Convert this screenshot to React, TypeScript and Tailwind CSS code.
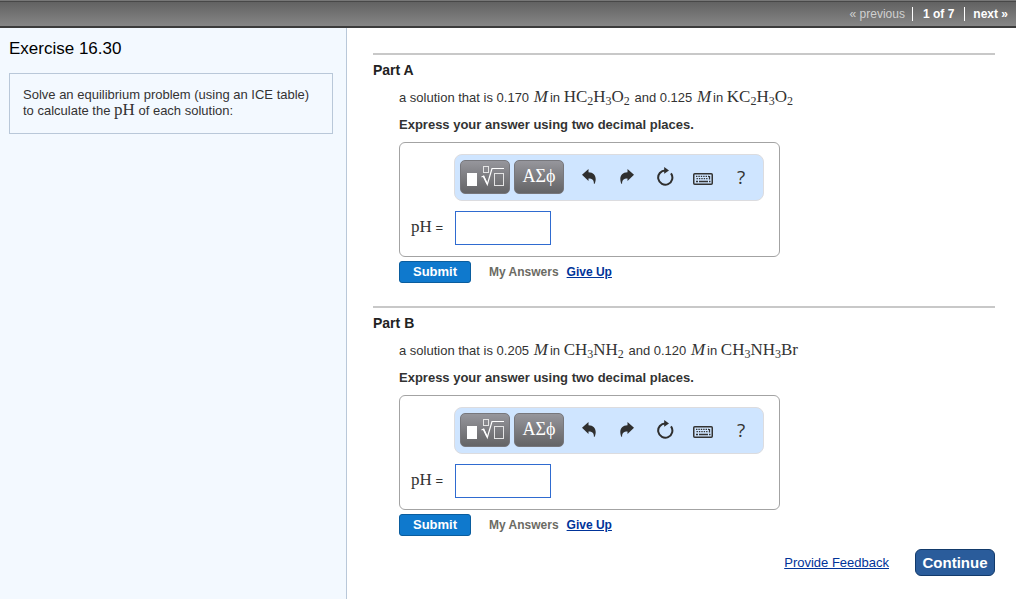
import { Fragment } from 'react';
import type { ReactNode } from 'react';

type Piece = { symbol: string; count?: number };

type Solution = { molarity: string; formula: Piece[] };

type PartData = { id: string; first: Solution; second: Solution };

const parts: PartData[] = [
  {
    id: 'A',
    first: {
      molarity: '0.170',
      formula: [{ symbol: 'HC', count: 2 }, { symbol: 'H', count: 3 }, { symbol: 'O', count: 2 }],
    },
    second: {
      molarity: '0.125',
      formula: [{ symbol: 'KC', count: 2 }, { symbol: 'H', count: 3 }, { symbol: 'O', count: 2 }],
    },
  },
  {
    id: 'B',
    first: {
      molarity: '0.205',
      formula: [{ symbol: 'CH', count: 3 }, { symbol: 'NH', count: 2 }],
    },
    second: {
      molarity: '0.120',
      formula: [{ symbol: 'CH', count: 3 }, { symbol: 'NH', count: 3 }, { symbol: 'Br' }],
    },
  },
];

function Serif({ children }: { children: ReactNode }) {
  return (
    <span className="font-['Liberation_Serif',serif] text-[17px] leading-[0px]">{children}</span>
  );
}

function Formula({ pieces }: { pieces: Piece[] }) {
  return (
    <Serif>
      {pieces.map((piece, i) => (
        <Fragment key={i}>
          {piece.symbol}
          {piece.count && <sub className="bottom-[-3px] text-[12px]">{piece.count}</sub>}
        </Fragment>
      ))}
    </Serif>
  );
}

function SolutionText({ solution }: { solution: Solution }) {
  return (
    <>
      {solution.molarity}{' '}
      <Serif>
        <i className="ml-px">M</i>
      </Serif>
      <span className="ml-0.5">in </span>
      <Formula pieces={solution.formula} />
    </>
  );
}

function TemplateIcon() {
  return (
    <svg viewBox="0 0 38 24" className="h-6 w-[38px]" fill="none" aria-hidden="true">
      <rect x="1" y="8" width="10" height="13" fill="#fff" />
      <rect x="17.5" y="1.5" width="5" height="6" stroke="#e4e4e4" />
      <path d="M15.5 12l2.2-1 3.6 8.5L26 3.5h12" stroke="#fff" strokeWidth="1.2" />
      <path d="M17.5 11.5l3.5 7" stroke="#fff" strokeWidth="1.5" />
      <rect x="28.5" y="8.5" width="9" height="12" stroke="#e4e4e4" />
    </svg>
  );
}

const bentArrow =
  'M0 5.7L6.5 0v3.2c4.8.1 7.200 3 7.200 6.800 0 1.900-.5 3.500-1 4.800h-.8c.1-3.900-1.500-5.300-5.400-5.400V12z';

function UndoIcon() {
  return (
    <svg viewBox="0 0 14 16" className="h-4 w-3.5" fill="#2f2f2f" aria-hidden="true">
      <path d={bentArrow} />
    </svg>
  );
}

function RedoIcon() {
  return (
    <svg viewBox="0 0 14 16" className="h-4 w-3.5" fill="#2f2f2f" aria-hidden="true">
      <path d={bentArrow} transform="matrix(-1 0 0 1 14 0)" />
    </svg>
  );
}

function ResetIcon() {
  return (
    <svg viewBox="0 0 18 20" className="h-5 w-[18px]" fill="none" aria-hidden="true">
      <path d="M9.5 3.500A7.100 7.100 0 1 0 15 6.400" stroke="#2f2f2f" strokeWidth="2" />
      <path d="M8.2 0L13 3.4 8.2 6.800z" fill="#2f2f2f" />
    </svg>
  );
}

function KeyboardIcon() {
  return (
    <svg viewBox="0 0 20 16" className="h-4 w-5" fill="none" aria-hidden="true">
      <rect x="0.75" y="4.75" width="18.500" height="10.500" rx="1" stroke="#333" strokeWidth="1.5" />
      <path d="M3 7.300h13" stroke="#333" strokeWidth="1.300" strokeDasharray="1.400 1" />
      <path d="M3.500 9.700h11" stroke="#333" strokeWidth="1.300" strokeDasharray="1.400 1" />
      <path d="M3 12.500h2M6 12.500h9M16 12.500h1.500M16.500 7v3.500" stroke="#333" strokeWidth="1.300" />
    </svg>
  );
}

function PaletteButton({ label, children }: { label: string; children: ReactNode }) {
  return (
    <button
      type="button"
      aria-label={label}
      className="flex h-[34px] w-[50px] items-center justify-center rounded-[5px] border border-[#77777c] bg-linear-to-b from-[#96969c] to-[#646466] text-white"
    >
      {children}
    </button>
  );
}

function ToolButton({ label, children }: { label: string; children: ReactNode }) {
  return (
    <button type="button" aria-label={label} className="flex h-[34px] w-[38px] items-center justify-center">
      {children}
    </button>
  );
}

function Toolbar() {
  return (
    <div className="mr-[15px] ml-[54px] flex items-center rounded-lg border border-[#dcdcdf] bg-[#cfe5ff] pt-[5px] pr-[3px] pb-[6px] pl-[5px]">
      <div className="mr-[6px] flex gap-1">
        <PaletteButton label="Templates">
          <TemplateIcon />
        </PaletteButton>
        <PaletteButton label="Symbols">
          <span className="pb-0.5 font-['Liberation_Serif',serif] text-[18px] leading-none">ΑΣϕ</span>
        </PaletteButton>
      </div>
      <ToolButton label="Undo">
        <UndoIcon />
      </ToolButton>
      <ToolButton label="Redo">
        <RedoIcon />
      </ToolButton>
      <ToolButton label="Reset">
        <ResetIcon />
      </ToolButton>
      <ToolButton label="Keyboard shortcuts">
        <KeyboardIcon />
      </ToolButton>
      <ToolButton label="Help">
        <span className="font-['Open_Sans',sans-serif] text-[19px] leading-none">?</span>
      </ToolButton>
    </div>
  );
}

function Part({ part }: { part: PartData }) {
  const fieldId = `answer-${part.id}`;
  return (
    <section className="mb-[23px] border-t-2 border-[#c8c8c8] pt-[5px] last-of-type:mb-0">
      <h2 className="text-[14px] leading-5 font-bold text-[#222]">Part {part.id}</h2>
      <div className="pl-[26px]">
        <p className="mt-2 h-5 leading-5 whitespace-nowrap">
          a solution that is <SolutionText solution={part.first} />
          <span className="ml-px"> and </span>
          <SolutionText solution={part.second} />
        </p>
        <p className="mt-[7px] leading-5 font-bold">Express your answer using two decimal places.</p>
        <div className="mt-[7px] w-fit rounded-md border border-[#a3a3a3] pt-[11px] pb-[11px]">
          <Toolbar />
          <div className="mt-2.5 flex items-center pl-[11px]">
            <label htmlFor={fieldId} className="w-11">
              <Serif>pH</Serif> =
            </label>
            <input id={fieldId} type="text" className="h-[34px] w-24 border border-[#2f6bd0] bg-white px-2 outline-none" />
          </div>
        </div>
        <div className="mt-1 flex items-center text-[12px] font-bold">
          <button
            type="button"
            className="h-[22px] w-[72px] rounded-[3px] border border-[#0a5d9e] bg-[#0f79cd] text-[13px] leading-5 text-white"
          >
            Submit
          </button>
          <span className="ml-[18px] text-[#6b6b63]">My Answers</span>
          <a href="#give-up" className="ml-2 text-[#003399] underline">
            Give Up
          </a>
        </div>
      </div>
    </section>
  );
}

export default function App() {
  return (
    <div className="flex min-h-screen flex-col bg-white font-['Liberation_Sans',Arial,sans-serif] text-[13px] text-[#333]">
      <header className="h-7 border-t border-[#777] bg-[#555]">
        <nav className="flex h-[27px] items-center justify-end border-t border-b-2 border-t-[#484848] border-b-[#3b3b3b] bg-linear-to-b from-[#626262] to-[#868686] pr-2 text-[12px] leading-[14px] text-white">
          <a href="#previous" className="text-[#d0d0d0]">
            « previous
          </a>
          <span className="mr-2 ml-[7px] border-x border-white px-2.5 font-bold">1 of 7</span>
          <a href="#next" className="font-bold">
            next »
          </a>
        </nav>
      </header>
      <div className="flex grow">
        <aside className="w-[347px] shrink-0 border-r border-[#b9c8d9] bg-[#f3f9ff] pr-[13px] pl-[9px]">
          <h1 className="mt-[9px] text-[17px] leading-6 text-black">Exercise 16.30</h1>
          <p className="mt-3 border border-[#b9c8d9] px-[13px] pt-[13px] pb-[14px] leading-4">
            Solve an equilibrium problem (using an ICE table)
            <br />
            to calculate the <Serif>pH</Serif> of each solution:
          </p>
        </aside>
        <main className="flex grow flex-col pt-[25px] pr-[21px] pl-[26px]">
          {parts.map((part) => (
            <Part key={part.id} part={part} />
          ))}
          <footer className="mt-[13px] flex items-center justify-end gap-[26px]">
            <a href="#feedback" className="text-[#003399] underline">
              Provide Feedback
            </a>
            <button
              type="button"
              className="h-[27px] w-20 rounded-md border border-[#123a6b] bg-[#2a5c9b] text-[15px] leading-6 font-bold text-white"
            >
              Continue
            </button>
          </footer>
        </main>
      </div>
    </div>
  );
}
